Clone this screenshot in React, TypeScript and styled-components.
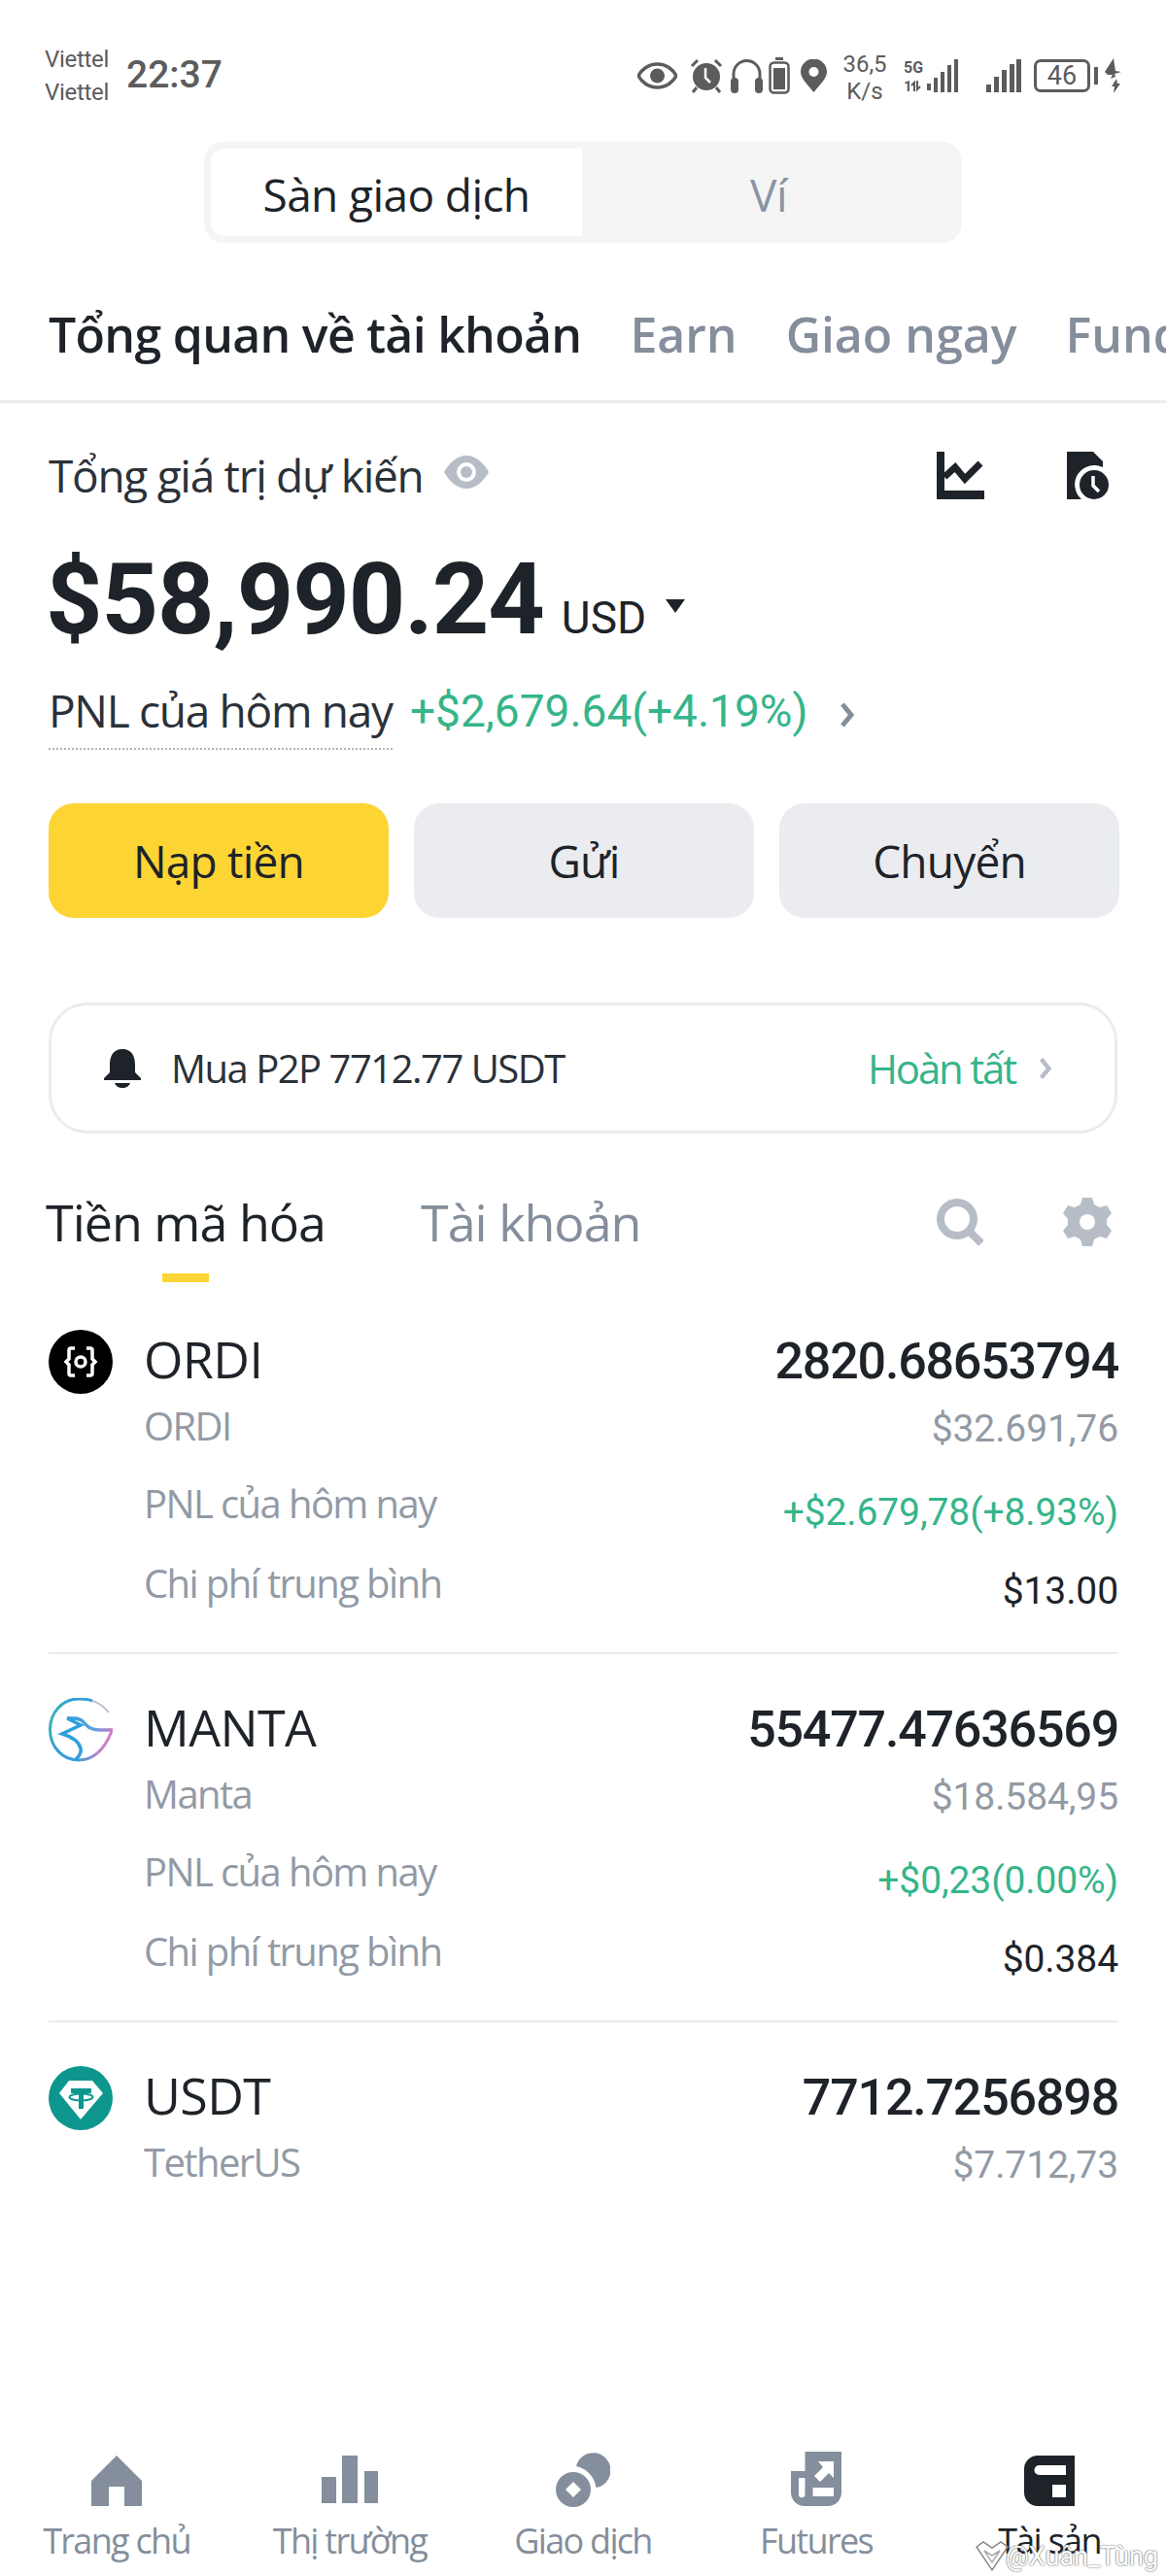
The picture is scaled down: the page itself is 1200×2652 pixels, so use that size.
import React from 'react';
import styled, { createGlobalStyle } from 'styled-components';

const GlobalStyle = createGlobalStyle`
    html, body {
        margin: 0;
        padding: 0;
        background: #fff;
    }
    * {
        box-sizing: border-box;
    }
`;

const TEXT_FONT = `"Open Sans", "Noto Sans", sans-serif`;
const NUM_FONT = `Roboto, "Liberation Sans", sans-serif`;

const Page = styled.div`
    position: relative;
    width: 1200px;
    height: 2652px;
    overflow: hidden;
    display: flex;
    flex-direction: column;
    background: #fff;
    color: #1e2329;
    font-family: ${TEXT_FONT};
`;

/* status bar */
const StatusBar = styled.div`
    height: 146px;
    padding: 44px 46px 0 46px;
    display: flex;
    align-items: flex-start;
    color: #5c5c5c;
    font-family: ${NUM_FONT};
`;

const Carriers = styled.div`
    width: 84px;
    font-size: 24px;
    line-height: 34px;
    letter-spacing: -0.3px;
`;

const Clock = styled.div`
    font-size: 39px;
    font-weight: 500;
    line-height: 66px;
`;

const StatusIcons = styled.div`
    margin-left: auto;
    height: 68px;
    display: flex;
    align-items: center;
`;

const StatusIcon = styled.svg<{ $gap?: number }>`
    display: block;
    margin-right: ${(p) => p.$gap ?? 0}px;
    fill: #5c5c5c;
`;

const NetSpeed = styled.div`
    width: 52px;
    margin-right: 14px;
    font-size: 24px;
    line-height: 28px;
    text-align: center;
    margin-top: 4px;
`;

const BatteryBox = styled.div`
    width: 58px;
    height: 34px;
    margin-right: 4px;
    border: 3px solid #5c5c5c;
    border-radius: 7px;
    font-size: 27px;
    line-height: 28px;
    text-align: center;
`;

/* top switch */
const SwitchWrap = styled.div`
    display: flex;
    justify-content: center;
`;

const Switch = styled.div`
    width: 780px;
    height: 104px;
    padding: 7px;
    display: flex;
    background: #f5f5f5;
    border-radius: 20px;
`;

const SwitchItem = styled.div<{ $active?: boolean }>`
    width: ${(p) => (p.$active ? 382 : 384)}px;
    padding-top: 3px;
    display: flex;
    align-items: center;
    justify-content: center;
    font-size: 46px;
    letter-spacing: -0.6px;
    font-weight: 500;
    color: ${(p) => (p.$active ? '#1e2329' : '#8b95a3')};
    background: ${(p) => (p.$active ? '#fff' : 'transparent')};
    border-radius: 14px 0 0 14px;
`;

/* account tabs */
const AccountTabs = styled.div`
    height: 165px;
    padding: 60px 0 0 50px;
    display: flex;
    gap: 50px;
    white-space: nowrap;
    overflow: hidden;
    border-bottom: 3px solid #eaecef;
`;

const AccountTab = styled.div<{ $active?: boolean }>`
    font-size: 50px;
    line-height: 68px;
    font-weight: 600;
    letter-spacing: ${(p) => (p.$active ? -0.7 : 0)}px;
    color: ${(p) => (p.$active ? '#1e2329' : '#848e9c')};
`;

/* balance summary */
const Summary = styled.section`
    padding: 40px 48px 0 50px;
`;

const LabelRow = styled.div`
    height: 68px;
    display: flex;
    align-items: center;
`;

const TotalLabel = styled.div`
    font-size: 46px;
    letter-spacing: -1.3px;
    color: #2b3139;
`;

const LabelTools = styled.div`
    margin-left: auto;
    margin-right: 10px;
    display: flex;
    align-items: center;
    gap: 85px;
`;

const AmountRow = styled.div`
    margin-top: 44px;
    margin-left: -3px;
    height: 100px;
    display: flex;
    align-items: baseline;
    font-family: ${NUM_FONT};
`;

const Amount = styled.div`
    font-size: 102px;
    line-height: 100px;
    font-weight: 700;
    letter-spacing: -1px;
`;

const Currency = styled.div`
    margin-left: 18px;
    font-size: 46px;
    font-weight: 400;
`;

const CaretIcon = styled.svg`
    margin-left: 20px;
    align-self: center;
    margin-top: 14px;
`;

const PnlRow = styled.div`
    margin-top: 32px;
    display: flex;
    align-items: center;
`;

const PnlLabel = styled.div`
    width: 354px;
    height: 73px;
    font-size: 46px;
    line-height: 64px;
    letter-spacing: -1.3px;
    white-space: nowrap;
    border-bottom: 2px dotted #aeb4bc;
    color: #2b3139;
`;

const PnlValue = styled.div`
    margin-left: 18px;
    margin-bottom: 8px;
    font-family: ${NUM_FONT};
    font-size: 46px;
    color: #35b58a;
`;

const Actions = styled.div`
    margin-top: 55px;
    display: grid;
    grid-template-columns: repeat(3, 350px);
    gap: 26px;
`;

const ActionButton = styled.div<{ $primary?: boolean }>`
    height: 118px;
    display: flex;
    align-items: center;
    justify-content: center;
    border-radius: 26px;
    font-size: 46px;
    font-weight: 500;
    letter-spacing: -0.8px;
    background: ${(p) => (p.$primary ? '#fcd535' : '#eaecef')};
`;

/* p2p notice */
const Notice = styled.div`
    margin: 87px 50px 0;
    height: 135px;
    padding: 0 64px 0 54px;
    display: flex;
    align-items: center;
    border: 3px solid #eaecef;
    border-radius: 40px;
`;

const NoticeText = styled.div`
    margin-left: 31px;
    font-size: 40px;
    letter-spacing: -1.5px;
    color: #2b3139;
`;

const NoticeAction = styled.div`
    margin-left: auto;
    font-size: 42px;
    font-weight: 500;
    letter-spacing: -2.2px;
    color: #35b58a;
`;

/* asset tabs */
const AssetTabs = styled.div`
    margin-top: 55px;
    padding: 0 54px 0 47px;
    height: 72px;
    display: flex;
    align-items: center;
`;

const AssetTab = styled.div<{ $active?: boolean }>`
    position: relative;
    margin-right: 98px;
    font-size: 52px;
    font-weight: 500;
    letter-spacing: -1px;
    line-height: 72px;
    color: ${(p) => (p.$active ? '#1e2329' : '#848e9c')};
`;

const ActiveBar = styled.div`
    position: absolute;
    left: 120px;
    bottom: -26px;
    width: 48px;
    height: 9px;
    background: #fcd535;
`;

const AssetTools = styled.div`
    margin-left: auto;
    margin-right: 2px;
    display: flex;
    align-items: center;
    gap: 82px;
`;

/* asset list */
const AssetList = styled.div`
    margin-top: 71px;
    padding: 0 49px 0 50px;
`;

const AssetRow = styled.div<{ $last?: boolean }>`
    padding-bottom: ${(p) => (p.$last ? 0 : 34)}px;
    margin-bottom: 41px;
    border-bottom: ${(p) => (p.$last ? 'none' : '2px solid #eaecef')};
    display: grid;
    grid-template-columns: 98px 1fr;
`;

const CoinIcon = styled.svg`
    display: block;
    margin-top: 4px;
`;

const AssetBody = styled.div``;

const AssetLine = styled.div<{ $h: number }>`
    height: ${(p) => p.$h}px;
    display: flex;
    align-items: center;
    justify-content: space-between;
`;

const CoinName = styled.div`
    font-size: 52px;
    font-weight: 500;
    letter-spacing: -0.6px;
`;

const CoinBalance = styled.div`
    padding-top: 6px;
    font-family: ${NUM_FONT};
    font-size: 52px;
    font-weight: 500;
    letter-spacing: -1.2px;
`;

const MutedText = styled.div`
    font-size: 40px;
    letter-spacing: -1.6px;
    color: #929aa5;
`;

const RowValue = styled.div<{ $color: string; $drop: number }>`
    padding-top: ${(p) => p.$drop}px;
    font-family: ${NUM_FONT};
    font-size: 39px;
    letter-spacing: -0.1px;
    color: ${(p) => p.$color};
`;

/* bottom nav */
const BottomNav = styled.nav`
    margin-top: auto;
    height: 128px;
    display: grid;
    grid-template-columns: repeat(5, 240px);
`;

const NavItem = styled.div<{ $active?: boolean }>`
    display: flex;
    flex-direction: column;
    align-items: center;
    color: ${(p) => (p.$active ? '#1e2329' : '#848e9c')};
    font-size: 36px;
    font-weight: 500;
    letter-spacing: -1.7px;
    line-height: 50px;
    white-space: nowrap;
`;

const NavIcon = styled.svg`
    display: block;
    height: 57px;
    margin-bottom: 10px;
    fill: currentColor;
`;

const Watermark = styled.div`
    position: absolute;
    right: 8px;
    bottom: 4px;
    display: flex;
    align-items: center;
    gap: 0;
    font-family: ${NUM_FONT};
    font-size: 27px;
    color: #fff;
    text-shadow: 0 0 2px #666, 0 0 1px #666;
`;

const Chevron = ({ color, w = 16, h = 26, gap = 24 }: { color: string; w?: number; h?: number; gap?: number }) => (
    <svg width={w} height={h} viewBox="0 0 16 26" style={{ marginLeft: gap }}>
        <path d="M3 2l9 11-9 11" fill="none" stroke={color} strokeWidth="5" />
    </svg>
);

const rows = [
    {
        key: 'ordi',
        name: 'ORDI',
        full: 'ORDI',
        balance: '2820.68653794',
        value: '$32.691,76',
        pnl: '+$2.679,78(+8.93%)',
        cost: '$13.00',
    },
    {
        key: 'manta',
        name: 'MANTA',
        full: 'Manta',
        balance: '55477.47636569',
        value: '$18.584,95',
        pnl: '+$0,23(0.00%)',
        cost: '$0.384',
    },
    {
        key: 'usdt',
        name: 'USDT',
        full: 'TetherUS',
        balance: '7712.7256898',
        value: '$7.712,73',
    },
];

const Coin = ({ kind }: { kind: string }) => {
    if (kind === 'ordi') {
        return (
            <CoinIcon width="66" height="66" viewBox="0 0 66 66">
                <circle cx="33" cy="33" r="33" fill="#000" />
                <path d="M27 19h-4a2 2 0 0 0-2 2v9l-3 3 3 3v9a2 2 0 0 0 2 2h4M39 19h4a2 2 0 0 1 2 2v9l3 3-3 3v9a2 2 0 0 1-2 2h-4" fill="none" stroke="#fff" strokeWidth="3.5" />
                <circle cx="33" cy="33" r="5" fill="none" stroke="#fff" strokeWidth="3.5" />
            </CoinIcon>
        );
    }
    if (kind === 'manta') {
        return (
            <CoinIcon width="66" height="66" viewBox="0 0 66 66">
                <defs>
                    <linearGradient id="mantaRing" x1="0" y1="0" x2="1" y2="0.3">
                        <stop offset="0" stopColor="#3fb8a6" />
                        <stop offset="0.35" stopColor="#2f9fdc" />
                        <stop offset="0.7" stopColor="#3f9fdc" />
                        <stop offset="1" stopColor="#cf7ec8" />
                    </linearGradient>
                    <linearGradient id="mantaFin" x1="0" y1="0" x2="1" y2="0">
                        <stop offset="0" stopColor="#2f9fdc" />
                        <stop offset="0.6" stopColor="#5f9fdc" />
                        <stop offset="1" stopColor="#d078c4" />
                    </linearGradient>
                </defs>
                <path d="M45 3C52 5 58 10 62 15" fill="none" stroke="#bdaecb" strokeWidth="1.5" />
                <path d="M45 3C40 1 35 1 31 1C14 1 1.500 15 1.500 33C1.500 50 14 64 31 64C48 64 58 52 65 34" fill="none" stroke="url(#mantaRing)" strokeWidth="3" />
                <path d="M19 21C26 21 31 20 35 24C40 30 44 33 52 33L66 33" fill="none" stroke="url(#mantaFin)" strokeWidth="3.500" />
                <path d="M19 21L33 28L14 37C24 40 31 44 33 52C34 56 31 61 28 63" fill="none" stroke="#2f9fdc" strokeWidth="3.500" />
            </CoinIcon>
        );
    }
    return (
        <CoinIcon width="66" height="66" viewBox="0 0 66 66">
            <circle cx="33" cy="33" r="33" fill="#0c968e" />
            <path d="M21 15H45L56 28L33 55L11 28z" fill="#fff" />
            <path d="M23 23h21v5h-8v16h-5V28h-8z" fill="#0c968e" />
            <ellipse cx="33.500" cy="32" rx="12" ry="3.500" fill="none" stroke="#0c968e" strokeWidth="2" />
        </CoinIcon>
    );
};

function App() {
    return (
        <Page>
            <GlobalStyle />
            <StatusBar>
                <Carriers>
                    Viettel
                    <br />
                    Viettel
                </Carriers>
                <Clock>22:37</Clock>
                <StatusIcons>
                    <StatusIcon $gap={13} width="41" height="28" viewBox="0 0 41 28">
                        <path d="M20.500 2C11 2 4 8 1 14c3 6 10 12 19.500 12S37 20 40 14C37 8 30 2 20.500 2z" fill="none" stroke="#5c5c5c" strokeWidth="3.500" />
                        <circle cx="20.500" cy="14" r="7.500" />
                    </StatusIcon>
                    <StatusIcon $gap={8} width="34" height="36" viewBox="0 0 34 36">
                        <circle cx="17" cy="19" r="14" />
                        <path d="M2 8l6-6M32 8l-6-6M7 30l-4 5M27 30l4 5" stroke="#5c5c5c" strokeWidth="3" />
                        <path d="M16 10v10l5 5" fill="none" stroke="#fff" strokeWidth="2.500" />
                    </StatusIcon>
                    <StatusIcon $gap={6} width="33" height="36" viewBox="0 0 33 36">
                        <path d="M3 24V16a13.500 13.500 0 0 1 27 0v8" fill="none" stroke="#5c5c5c" strokeWidth="3" />
                        <rect x="0" y="20" width="8" height="16" rx="4" />
                        <rect x="25" y="20" width="8" height="16" rx="4" />
                    </StatusIcon>
                    <StatusIcon $gap={11} width="22" height="38" viewBox="0 0 22 38">
                        <rect x="7" y="0" width="8" height="3" />
                        <rect x="1.500" y="5.500" width="19" height="31" rx="4" fill="none" stroke="#5c5c5c" strokeWidth="2.500" />
                        <rect x="5" y="11" width="12" height="22" />
                    </StatusIcon>
                    <StatusIcon $gap={13} width="27" height="34" viewBox="0 0 27 34">
                        <path d="M13.500 34C6 25 0 19 0 13a13.500 13.500 0 0 1 27 0c0 6-6 12-13.500 21z" />
                        <circle cx="13.500" cy="13" r="5" fill="#fff" />
                    </StatusIcon>
                    <NetSpeed>
                        36,5
                        <br />
                        K/s
                    </NetSpeed>
                    <StatusIcon $gap={29} width="56" height="34" viewBox="0 0 56 34">
                        <rect x="24" y="25" width="4" height="7" />
                        <rect x="31" y="19" width="4" height="15" />
                        <rect x="38" y="13" width="4" height="21" />
                        <rect x="45" y="6" width="4" height="28" />
                        <rect x="52" y="0" width="4" height="34" />
                        <text x="0" y="14" fontSize="16" fontWeight="700" fontFamily="Roboto">5G</text>
                        <text x="0" y="33" fontSize="15" fontWeight="700" fontFamily="Roboto">1</text>
                        <path d="M11 33v-9l-3 3M14 22v9l3-3" fill="none" stroke="#5c5c5c" strokeWidth="2" />
                    </StatusIcon>
                    <StatusIcon $gap={13} width="36" height="34" viewBox="0 0 36 34">
                        <rect x="0" y="26" width="5" height="8" />
                        <rect x="8" y="18" width="5" height="16" />
                        <rect x="16" y="11" width="5" height="23" />
                        <rect x="24" y="5" width="5" height="29" />
                        <rect x="31" y="0" width="5" height="34" />
                    </StatusIcon>
                    <BatteryBox>46</BatteryBox>
                    <StatusIcon $gap={6} width="4" height="18" viewBox="0 0 4 18">
                        <rect width="4" height="18" />
                    </StatusIcon>
                    <StatusIcon width="18" height="36" viewBox="0 0 18 36">
                        <path d="M10 0L1 14l3 3h5L7 21l5-2-1-3 7-2-6-1zM13 21l-5 8h3l-1 7 7-10h-3z" />
                    </StatusIcon>
                </StatusIcons>
            </StatusBar>

            <SwitchWrap>
                <Switch>
                    <SwitchItem $active>Sàn giao dịch</SwitchItem>
                    <SwitchItem>Ví</SwitchItem>
                </Switch>
            </SwitchWrap>

            <AccountTabs>
                <AccountTab $active>Tổng quan về tài khoản</AccountTab>
                <AccountTab>Earn</AccountTab>
                <AccountTab>Giao ngay</AccountTab>
                <AccountTab>Funding</AccountTab>
            </AccountTabs>

            <Summary>
                <LabelRow>
                    <TotalLabel>Tổng giá trị dự kiến</TotalLabel>
                    <svg width="46" height="34" viewBox="0 0 46 34" style={{ marginLeft: 22, marginBottom: 6 }}>
                        <path d="M23 0C13 0 5 8 0 17c5 9 13 17 23 17s18-8 23-17C41 8 33 0 23 0z" fill="#b7bdc6" />
                        <circle cx="23" cy="17" r="10" fill="#fff" />
                        <circle cx="23" cy="17" r="6" fill="#b7bdc6" />
                    </svg>
                    <LabelTools>
                        <svg width="49" height="49" viewBox="0 0 49 49">
                            <path d="M0 0h8v40h41v9H0z" fill="#1e2329" />
                            <path d="M8 26L19 16l10 12L45 12" fill="none" stroke="#1e2329" strokeWidth="7" />
                        </svg>
                        <svg width="44" height="49" viewBox="0 0 44 49">
                            <path d="M0 0H27L37 10V16A20 20 0 0 0 15 49H0z" fill="#1e2329" />
                            <circle cx="28" cy="34" r="15" fill="#1e2329" />
                            <path d="M27 25v10l6 6" fill="none" stroke="#fff" strokeWidth="3.500" />
                        </svg>
                    </LabelTools>
                </LabelRow>
                <AmountRow>
                    <Amount>$58,990.24</Amount>
                    <Currency>USD</Currency>
                    <CaretIcon width="20" height="14" viewBox="0 0 20 14">
                        <path d="M0 0h20L10 14z" fill="#1e2329" />
                    </CaretIcon>
                </AmountRow>
                <PnlRow>
                    <PnlLabel>PNL của hôm nay</PnlLabel>
                    <PnlValue>+$2,679.64(+4.19%)</PnlValue>
                    <Chevron color="#848e9c" gap={32} />
                </PnlRow>
                <Actions>
                    <ActionButton $primary>Nạp tiền</ActionButton>
                    <ActionButton>Gửi</ActionButton>
                    <ActionButton>Chuyển</ActionButton>
                </Actions>
            </Summary>

            <Notice>
                <svg width="38" height="40" viewBox="0 0 38 40">
                    <path d="M19 0C9 0 6 8 6 16v8l-6 6v2h38v-2l-6-6v-8C32 8 29 0 19 0z" fill="#1e2329" />
                    <path d="M11 35h16c-1 3-4 5-8 5s-7-2-8-5z" fill="#1e2329" />
                </svg>
                <NoticeText>Mua P2P 7712.77 USDT</NoticeText>
                <NoticeAction>Hoàn tất</NoticeAction>
                <Chevron color="#b7bdc6" w={14} h={24} />
            </Notice>

            <AssetTabs>
                <AssetTab $active>
                    Tiền mã hóa
                    <ActiveBar />
                </AssetTab>
                <AssetTab>Tài khoản</AssetTab>
                <AssetTools>
                    <svg width="48" height="48" viewBox="0 0 48 48">
                        <circle cx="21" cy="21" r="17" fill="none" stroke="#b7bdc6" strokeWidth="8" />
                        <path d="M33 33l13 13" stroke="#b7bdc6" strokeWidth="8" />
                    </svg>
                    <svg width="50" height="50" viewBox="0 0 50 50">
                        <path d="M20 0h10l2 7 6 3 7-2 5 8-5 6v6l5 6-5 8-7-2-6 3-2 7H20l-2-7-6-3-7 2-5-8 5-6v-6l-5-6 5-8 7 2 6-3z" fill="#b7bdc6" />
                        <circle cx="25" cy="25" r="8" fill="#fff" />
                    </svg>
                </AssetTools>
            </AssetTabs>

            <AssetList>
                {rows.map((row, i) => (
                    <AssetRow key={row.key} $last={i === rows.length - 1}>
                        <Coin kind={row.key} />
                        <AssetBody>
                            <AssetLine $h={66}>
                                <CoinName>{row.name}</CoinName>
                                <CoinBalance>{row.balance}</CoinBalance>
                            </AssetLine>
                            <AssetLine $h={72}>
                                <MutedText>{row.full}</MutedText>
                                <RowValue $color="#929aa5" $drop={8}>{row.value}</RowValue>
                            </AssetLine>
                            {row.pnl && (
                                <>
                                    <AssetLine $h={88}>
                                        <MutedText>PNL của hôm nay</MutedText>
                                        <RowValue $color="#35b58a" $drop={20}>{row.pnl}</RowValue>
                                    </AssetLine>
                                    <AssetLine $h={76}>
                                        <MutedText>Chi phí trung bình</MutedText>
                                        <RowValue $color="#1e2329" $drop={18}>{row.cost}</RowValue>
                                    </AssetLine>
                                </>
                            )}
                        </AssetBody>
                    </AssetRow>
                ))}
            </AssetList>

            <BottomNav>
                <NavItem>
                    <NavIcon width="52" height="57" viewBox="0 0 52 57">
                        <path d="M26 4L52 30V56H34V36H18V56H0V30z" />
                    </NavIcon>
                    Trang chủ
                </NavItem>
                <NavItem>
                    <NavIcon width="58" height="57" viewBox="0 0 58 57">
                        <path d="M0 26h15v27H0zM21 4h16v49H21zM44 20h14v33H44z" />
                    </NavIcon>
                    Thị trường
                </NavItem>
                <NavItem>
                    <NavIcon width="56" height="57" viewBox="0 0 56 57">
                        <path d="M21 15A18 18 0 1 1 41.500 37A26 26 0 0 0 21 15z" />
                        <path fillRule="evenodd" d="M18 21a18 18 0 1 1 0 36a18 18 0 1 1 0-36zM18 31l-8 8 8 8 8-8z" />
                    </NavIcon>
                    Giao dịch
                </NavItem>
                <NavItem>
                    <NavIcon width="52" height="57" viewBox="0 0 52 57">
                        <path fillRule="evenodd" d="M14.500 0H52V42A14 14 0 0 1 38 56H14A14 14 0 0 1 0 42V20H14.500zM44 10H28l5 6-9 9 6 6 9-9 5 5zM22.500 37V46H44V37zM8 27V44a3 3 0 0 0 6.500 0V27z" />
                    </NavIcon>
                    Futures
                </NavItem>
                <NavItem $active>
                    <NavIcon width="52" height="57" viewBox="0 0 52 57">
                        <path fillRule="evenodd" d="M14 4H52V56H14A14 14 0 0 1 0 42V18A14 14 0 0 1 14 4zM15.500 14a5 5 0 0 0 0 10H43V14zM29 34V47H43V34z" />
                    </NavIcon>
                    Tài sản
                </NavItem>
            </BottomNav>
            <Watermark>
                <svg width="36" height="32" viewBox="0 0 36 32" style={{ marginRight: -4 }}>
                    <path d="M2 6l7-5 9 6 9-6 7 5-16 24z" fill="none" stroke="#888" strokeWidth="1.500" />
                    <path d="M10 10l8 5 8-5-8 12z" fill="none" stroke="#aaa" strokeWidth="1.500" />
                </svg>
                @Xuân_Tùng
            </Watermark>
        </Page>
    );
}

export default App;
